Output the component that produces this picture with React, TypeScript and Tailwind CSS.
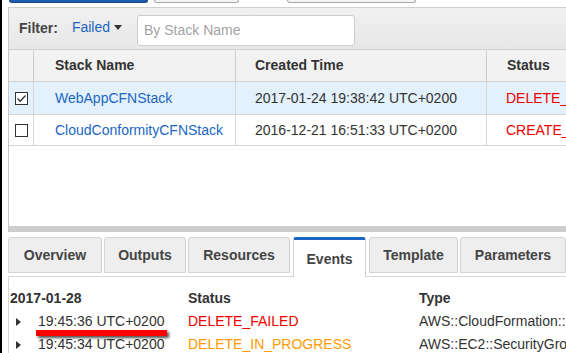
import React from "react";

function Checkbox({ checked }: { checked?: boolean }) {
  return (
    <div className="w-[13px] h-[13px] border border-[#333] bg-white flex items-center justify-center">
      {checked && (
        <svg width="11" height="11" viewBox="0 0 11 11">
          <path d="M1.5 5.5 L4.2 8.3 L9.5 2.5" fill="none" stroke="#333" strokeWidth="1.3" />
        </svg>
      )}
    </div>
  );
}

function Arrow() {
  return (
    <svg width="5" height="8" viewBox="0 0 5 8" className="shrink-0">
      <path d="M0 0 L5 4 L0 8 Z" fill="#333" />
    </svg>
  );
}

export default function App() {
  return (
    <div className="w-[566px] h-[353px] overflow-hidden bg-white flex font-['Liberation_Sans',Arial,sans-serif] text-[14px] text-[#333]">
      <div className="w-[2px] bg-black shrink-0" />
      <div className="flex-1 pl-[6px] flex flex-col min-w-0">
        {/* top buttons (bottom edges only) */}
        <div className="h-[7px] flex items-start shrink-0">
          <div className="ml-[1px] w-[139px] h-[3px] bg-[#1d5fae] rounded-b-[3px] border-b border-x border-[#0f4a8f]" />
          <div className="ml-[6px] w-[85px] h-[3px] bg-[#f4f4f4] rounded-b-[3px] border-b border-x border-[#a8a8a8]" />
          <div className="ml-[48px] w-[129px] h-[3px] bg-[#f4f4f4] rounded-b-[3px] border-b border-x border-[#a8a8a8]" />
        </div>

        {/* stacks panel */}
        <div className="border-l border-[#c8c8c8] flex flex-col shrink-0">
          {/* toolbar */}
          <div className="h-[42px] border-t border-[#cfcfcf] bg-gradient-to-b from-[#f1f1f1] to-[#e7e7e7] flex items-center pl-[10px]">
            <span className="font-bold text-[#444]">Filter:</span>
            <span className="ml-[14px] text-[#1a66c2] -mt-[2px]">Failed</span>
            <svg width="8" height="5" viewBox="0 0 8 5" className="ml-[4px] -mt-[3px]">
              <path d="M0 0 L8 0 L4 5 Z" fill="#333" />
            </svg>
            <div className="ml-[15px] mt-[3px] w-[218px] h-[31px] bg-white border border-[#cdcdcd] rounded-[3px] flex items-center pl-[6px] text-[#a3a3a3]">
              By Stack Name
            </div>
          </div>

          {/* header */}
          <div className="h-[33px] border-y border-[#cfcfcf] bg-[#f2f2f2] grid grid-cols-[25px_202px_251px_1fr] font-bold text-[#333]">
            <div className="border-r border-[#cfcfcf]" />
            <div className="border-r border-[#cfcfcf] flex items-center pl-[21px]">Stack Name</div>
            <div className="border-r border-[#cfcfcf] flex items-center pl-[19px]">Created Time</div>
            <div className="flex items-center pl-[20px]">Status</div>
          </div>

          {/* row 1 */}
          <div className="h-[33px] border-b border-[#d6d6d6] bg-[#e3f1fc] grid grid-cols-[25px_202px_251px_1fr]">
            <div className="border-r border-[#d6d6d6] flex items-center pl-[6px]">
              <Checkbox checked />
            </div>
            <div className="border-r border-[#d6d6d6] flex items-center pl-[21px] text-[#1a66c2]">WebAppCFNStack</div>
            <div className="border-r border-[#d6d6d6] flex items-center pl-[19px] text-[#333]">2017-01-24 19:38:42 UTC+0200</div>
            <div className="flex items-center pl-[19px] text-[#ee0000] whitespace-nowrap">DELETE_FAILED</div>
          </div>

          {/* row 2 */}
          <div className="h-[31px] border-b border-[#d6d6d6] bg-white grid grid-cols-[25px_202px_251px_1fr]">
            <div className="border-r border-[#d6d6d6] flex items-center pl-[6px]">
              <Checkbox />
            </div>
            <div className="border-r border-[#d6d6d6] flex items-center pl-[21px] text-[#1a66c2]">CloudConformityCFNStack</div>
            <div className="border-r border-[#d6d6d6] flex items-center pl-[19px] text-[#333]">2016-12-21 16:51:33 UTC+0200</div>
            <div className="flex items-center pl-[19px] text-[#ee0000] whitespace-nowrap">CREATE_FAILED</div>
          </div>

          <div className="h-[80px] bg-white" />
          <div className="h-[6px] bg-[#cdcdcd]" />
        </div>

        {/* tabs */}
        <div className="mt-[5px] h-[40px] border-b border-[#d6d6d6] flex items-start shrink-0 font-bold text-[#444]">
          <div className="w-[94px] h-[36px] bg-[#eeeeee] border border-[#d3d3d3] rounded-t-[3px] flex items-center justify-center">Overview</div>
          <div className="ml-[2px] w-[82px] h-[36px] bg-[#eeeeee] border border-[#d3d3d3] rounded-t-[3px] flex items-center justify-center">Outputs</div>
          <div className="ml-[2px] w-[102px] h-[36px] bg-[#eeeeee] border border-[#d3d3d3] rounded-t-[3px] flex items-center justify-center">Resources</div>
          <div className="relative ml-[3px] w-[73px] h-[40px] bg-white border-x border-[#d3d3d3] border-t-[3px] border-t-[#1a66c2] rounded-t-[3px] flex items-center justify-center pt-[2px]">Events</div>
          <div className="ml-[3px] w-[89px] h-[36px] bg-[#eeeeee] border border-[#d3d3d3] rounded-t-[3px] flex items-center justify-center">Template</div>
          <div className="ml-[2px] w-[106px] h-[36px] shrink-0 bg-[#eeeeee] border border-[#d3d3d3] rounded-t-[3px] flex items-center justify-center">Parameters</div>
        </div>

        {/* events content */}
        <div className="flex-1 border-l border-[#d6d6d6] pt-[10px] whitespace-nowrap">
          <div className="h-[23px] grid grid-cols-[179px_231px_1fr] items-center font-bold text-[#333]">
            <div className="pl-[1px]">2017-01-28</div>
            <div>Status</div>
            <div>Type</div>
          </div>
          <div className="relative h-[23px] grid grid-cols-[179px_231px_1fr] items-center">
            <div className="flex items-center pl-[7px]">
              <Arrow />
              <span className="ml-[17px]">19:45:36 UTC+0200</span>
            </div>
            <div className="text-[#ee0000]">DELETE_FAILED</div>
            <div className="overflow-hidden">AWS::CloudFormation::Stack</div>
            <div className="absolute left-[27px] top-[20px] w-[131px] h-[6px] bg-[#ff0000] shadow-[2px_2px_3px_rgba(0,0,0,0.7)]" />
          </div>
          <div className="h-[23px] grid grid-cols-[179px_231px_1fr] items-center">
            <div className="flex items-center pl-[7px]">
              <Arrow />
              <span className="ml-[17px]">19:45:34 UTC+0200</span>
            </div>
            <div className="text-[#ff9900]">DELETE_IN_PROGRESS</div>
            <div className="overflow-hidden">AWS::EC2::SecurityGroup</div>
          </div>
        </div>
      </div>
    </div>
  );
}
